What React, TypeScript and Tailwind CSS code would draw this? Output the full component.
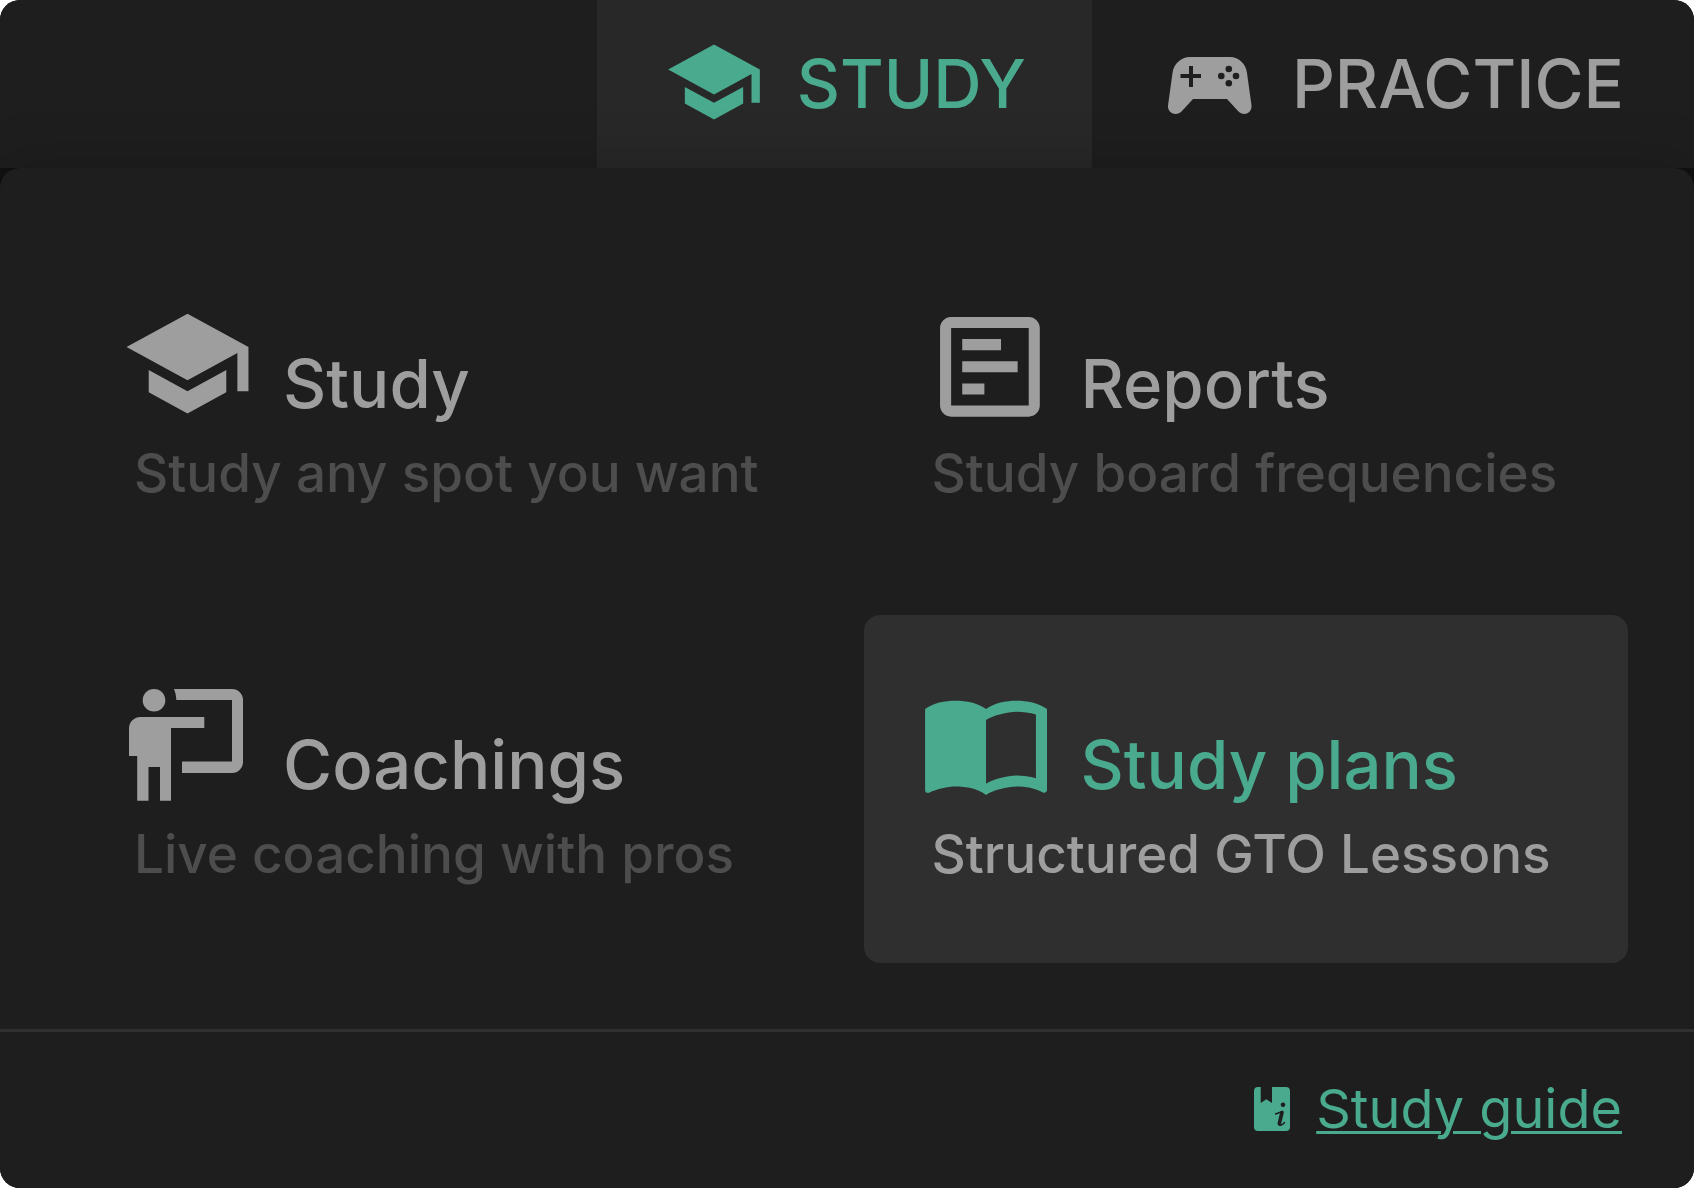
import type { ReactNode } from "react";
import { MdImportContacts, MdSchool } from "react-icons/md";

type MenuItem = {
  title: string;
  description: string;
  icon: ReactNode;
  active?: boolean;
};

function GamepadIcon() {
  return (
    <svg viewBox="-9 -25 100 100" className="size-[100px] shrink-0" fill="currentColor" aria-hidden="true">
      <path
        fillRule="evenodd"
        d="M22 0H62C71 0 78 7 79 16L83.500 48.500C84 53 80.500 57 76.500 57C74 57 72 56 70.500 54.500L59 42H25L13.500 54.500C12 56 10 57 7.500 57C3 57 -0.500 53 0 48.500L4.500 16C5.500 7 13 0 22 0ZM21 9V17H12.500V21H21V30H25V21H33V17H25V9Z"
      />
      <g fill="#1e1e1e">
        <circle cx="60.800" cy="12" r="3.300" />
        <circle cx="53.300" cy="19" r="3.300" />
        <circle cx="68" cy="19" r="3.300" />
        <circle cx="60.800" cy="26.200" r="3.300" />
      </g>
    </svg>
  );
}

function ReportsIcon() {
  return (
    <svg viewBox="-0.8 -0.6 24 24" className="size-[133px] shrink-0" fill="currentColor" aria-hidden="true">
      <path
        fillRule="evenodd"
        d="M5 3h14c1.100 0 2 .9 2 2v14c0 1.100-.9 2-2 2H5c-1.100 0-2-.9-2-2V5c0-1.100.9-2 2-2zm0 2v14h14V5H5z"
      />
      <path d="M7 7h7v2H7zM7 11h10v2H7zM7 15h4v2H7z" />
    </svg>
  );
}

function CoachingIcon() {
  return (
    <svg viewBox="0 0 133 133" className="size-[133px] shrink-0" fill="currentColor" aria-hidden="true">
      <circle cx="33" cy="22.300" r="11.300" />
      <path d="M53 11H111A11 11 0 0 1 122 22V84A11 11 0 0 1 111 95H61V83.500H111V22H55.400Q55.200 16 53 11Z" />
      <path d="M19.500 39H83.300V50H50V122.700H39V89H27.500V122.700H16.200V78H8V50.500A11.500 11.500 0 0 1 19.500 39Z" />
    </svg>
  );
}

function GuideIcon() {
  return (
    <svg viewBox="0 0 36 44" className="h-[44px] w-[36px] shrink-0" aria-hidden="true">
      <path
        fill="currentColor"
        d="M4 0H6.700V16L12.300 12.300L18 16V0H32A4 4 0 0 1 36 4V40A4 4 0 0 1 32 44H4A4 4 0 0 1 0 40V4A4 4 0 0 1 4 0Z"
      />
      {/* info mark in the lower corner of the cover */}
      <g fill="none" stroke="#1e1e1e" strokeLinecap="round" strokeLinejoin="round">
        <circle cx="29" cy="17.700" r="2.300" fill="#1e1e1e" stroke="none" />
        <path strokeWidth="3.600" d="M28 25.500L25.300 36.500" />
        <path strokeWidth="1.400" d="M21.500 27L28.500 24.500M24.800 37.700C25.500 39 28.500 38 30.500 35.500" />
      </g>
    </svg>
  );
}

const items: MenuItem[] = [
  {
    title: "Study",
    description: "Study any spot you want",
    icon: <MdSchool className="size-[133px] shrink-0" aria-hidden="true" />,
  },
  {
    title: "Reports",
    description: "Study board frequencies",
    icon: <ReportsIcon />,
  },
  {
    title: "Coachings",
    description: "Live coaching with pros",
    icon: <CoachingIcon />,
  },
  {
    title: "Study plans",
    description: "Structured GTO Lessons",
    icon: <MdImportContacts viewBox="-0.1 0.4 24 24" className="size-[133px] shrink-0" aria-hidden="true" />,
    active: true,
  },
];

function MenuCard({ title, description, icon, active }: MenuItem) {
  return (
    <a
      href="#"
      className={`block rounded-2xl pt-[63px] pb-[77px] pl-[55px] ${active ? "bg-[#2f2f2f]" : ""}`}
    >
      <div className={`flex items-end gap-[29px] ${active ? "text-[#4aaa8e]" : "text-[#9e9e9e]"}`}>
        {icon}
        <h2 className="text-[67px] leading-[92px] font-medium whitespace-nowrap">{title}</h2>
      </div>
      <p
        className={`mt-[11px] pl-[13px] text-[53px] leading-[64px] font-medium whitespace-nowrap ${
          active ? "text-[#9e9e9e]" : "text-[#4d4d4d]"
        }`}
      >
        {description}
      </p>
    </a>
  );
}

export default function App() {
  return (
    <div className="overflow-hidden rounded-[20px] bg-[#111111] font-['Inter',sans-serif]">
      <nav className="flex justify-end bg-[#1e1e1e] pr-1">
        <button
          type="button"
          className="flex items-start gap-[33px] bg-[#282828] pr-[66px] pl-[67px] py-8 text-[67px] leading-[104px] font-medium text-[#4aaa8e]"
        >
          <MdSchool className="size-[100px] shrink-0" aria-hidden="true" />
          STUDY
        </button>
        <button
          type="button"
          className="flex items-start gap-[33px] pr-[66px] pl-[67px] py-8 text-[67px] leading-[104px] font-medium text-[#9e9e9e]"
        >
          <GamepadIcon />
          PRACTICE
        </button>
      </nav>

      <main className="relative rounded-t-[20px] bg-[#1e1e1e] shadow-[0_0_60px_rgba(0,0,0,0.2)]">
        <div className="grid grid-cols-2 gap-[33px] p-[66px]">
          {items.map((item) => (
            <MenuCard key={item.title} {...item} />
          ))}
        </div>

        <footer className="flex items-start justify-end gap-[26px] border-t-[3px] border-[#303030] px-[72px] pt-[45px] pb-[47px] text-[#4aaa8e]">
          <div className="flex h-[64px] items-center">
            <GuideIcon />
          </div>
          <a href="#" className="text-[54px] leading-[64px] underline decoration-[3px] underline-offset-[3px]">
            Study guide
          </a>
        </footer>
      </main>
    </div>
  );
}
